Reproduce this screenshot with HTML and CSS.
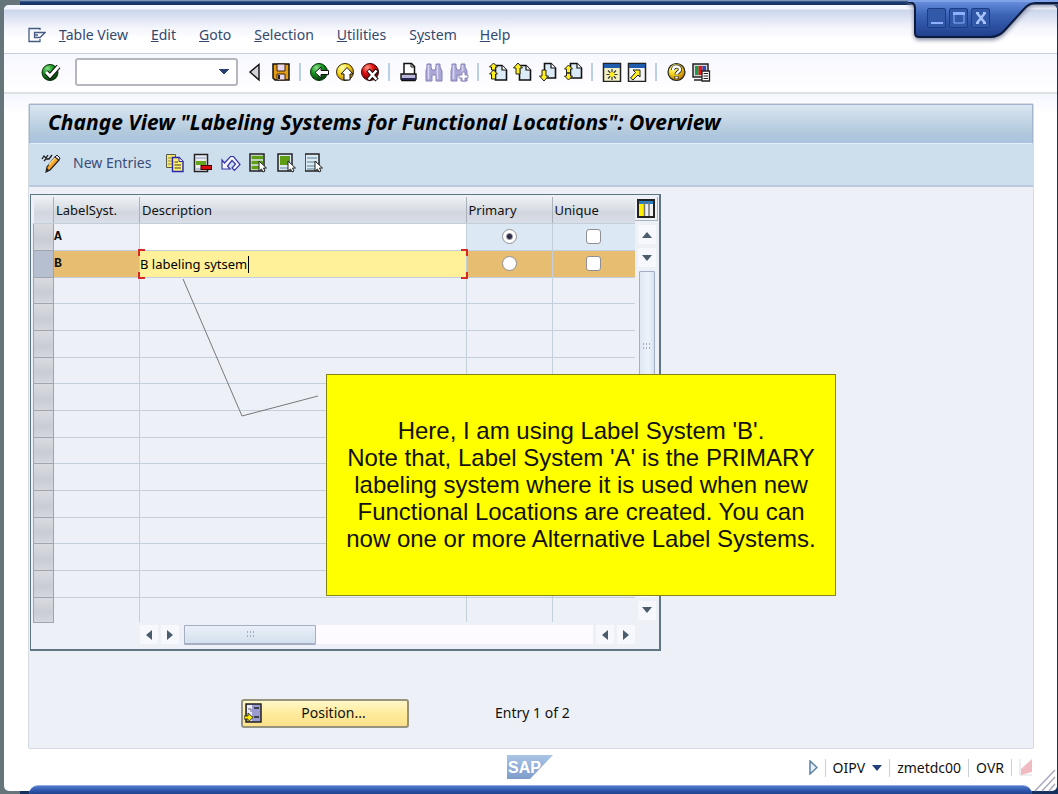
FILE: index.html
```html
<!doctype html>
<html lang="en">
    <head>
        <meta charset="utf-8" />
        <title>Change View "Labeling Systems for Functional Locations": Overview</title>
        <link rel="stylesheet" href="styles.css">
    </head>
    <body>
        <!-- Shared icon parts -->
        <svg class="defs" aria-hidden="true">
            <defs>
                <radialGradient id="green" cx="35%" cy="25%" r="75%"><stop offset="0" stop-color="#8fe08f" /><stop offset=".45" stop-color="#189a20" /><stop offset="1" stop-color="#063c0a" /></radialGradient>
                <radialGradient id="yellow" cx="35%" cy="25%" r="75%"><stop offset="0" stop-color="#ffffb0" /><stop offset=".5" stop-color="#f6d81c" /><stop offset="1" stop-color="#b87800" /></radialGradient>
                <radialGradient id="red" cx="35%" cy="25%" r="75%"><stop offset="0" stop-color="#ff9a8a" /><stop offset=".45" stop-color="#e01010" /><stop offset="1" stop-color="#6a0000" /></radialGradient>
                <linearGradient id="notch" x2="0" y2="1"><stop offset="0" stop-color="#6d93e0" /><stop offset=".4" stop-color="#3b63b6" /><stop offset="1" stop-color="#1f3f8c" /></linearGradient>
                <linearGradient id="logo" x2="0" y2="1"><stop offset="0" stop-color="#a9c4e6" /><stop offset="1" stop-color="#7d9cc9" /></linearGradient>
                <g id="page"><path d="M7.500 3.500H14L18.500 8V18H7.500Z" fill="#dcebf8" stroke="#111" stroke-width="1.600" /><path d="M14 3.500V8H18.500" fill="#fff" stroke="#111" stroke-width="1.200" /></g>
                <g id="binoculars"><path d="M3 2H7V5L8 8H11L12 5V2H16V5L18 9V19H12V13H8V19H2V9L3 5Z" fill="#aaa7d6" stroke="#8583b5" /><path d="M4.500 3V17M13.500 3V17" stroke="#d9d8f2" stroke-width="1.500" /></g>
                <g id="sheet"><rect x="2" y="2" width="14" height="17" fill="#dce9f2" stroke="#222" stroke-width="1.500" /></g>
                <path id="cursor" d="M12 9V19L14.500 17L16 20L18 19L16.500 16H19.500Z" fill="#fff" stroke="#222" />
            </defs>
        </svg>

        <div class="window">
            <nav class="menubar">
                <button class="menu-icon" type="button" aria-label="Menu">
                    <svg width="18" height="16" viewBox="0 0 18 16" fill="none" stroke="#465b80" stroke-width="1.300"><path d="M12 3V1.500H1V14.500H12V12M6.500 5.500H17L12 10.500H6.500ZM6.500 8H10" /></svg>
                </button>
                <a href="#"><u>T</u>able View</a>
                <a href="#"><u>E</u>dit</a>
                <a href="#"><u>G</u>oto</a>
                <a href="#"><u>S</u>election</a>
                <a href="#"><u>U</u>tilities</a>
                <a href="#">S<u>y</u>stem</a>
                <a href="#"><u>H</u>elp</a>
            </nav>

            <div class="toolbar">
                <button class="icon" type="button" aria-label="Enter"><svg viewBox="0 0 20 20"><circle cx="9" cy="10.500" r="8" fill="url(#green)" stroke="#063006" /><path d="M5 10L9 14L17.500 4.500" fill="none" stroke="#111" stroke-width="5" /><path d="M5 10L9 14L17.500 4.500" fill="none" stroke="#fff" stroke-width="3" /></svg></button>
                <select class="command" aria-label="Command"><option></option></select>
                <button class="icon back" type="button" aria-label="Collapse"><svg viewBox="0 0 20 20"><path d="M14 2.500V18L5 10Z" fill="#d2d4da" stroke="#111" stroke-width="1.400" /></svg></button>
                <button class="icon" type="button" aria-label="Save"><svg viewBox="0 0 20 20"><path d="M2 2H18V18H4L2 16Z" fill="#e79b13" stroke="#111" stroke-width="1.500" /><path d="M6 2H14V9H6Z" fill="#ead7f0" stroke="#3b2405" /><path d="M6 12H14V18H6Z" fill="#ead7f0" stroke="#3b2405" /><path d="M7 13H9V17H7Z" fill="#222" /></svg></button>
                <span class="sep"></span>
                <div class="group">
                    <button class="icon" type="button" aria-label="Back"><svg viewBox="0 0 20 20"><circle cx="9" cy="10" r="8.500" fill="url(#green)" stroke="#063006" /><path d="M5 10.500L11 5V8.500H18.500V12.500H11V16Z" fill="#fff" stroke="#111" /></svg></button>
                    <button class="icon" type="button" aria-label="Exit"><svg viewBox="0 0 20 20"><circle cx="10" cy="10" r="8.500" fill="url(#yellow)" stroke="#3a2a00" /><path d="M12 5.500L18 12H15V18H9V12H6Z" fill="#fff" stroke="#111" /></svg></button>
                    <button class="icon" type="button" aria-label="Cancel"><svg viewBox="0 0 20 20"><circle cx="10" cy="10" r="8.500" fill="url(#red)" stroke="#400" /><path d="M8 8L17 18M17 8L8 18" stroke="#111" stroke-width="4.500" /><path d="M8.500 8.500L16.500 17.500M16.500 8.500L8.500 17.500" stroke="#fff" stroke-width="2.500" /></svg></button>
                </div>
                <span class="sep"></span>
                <div class="group">
                    <button class="icon" type="button" aria-label="Print"><svg viewBox="0 0 20 20"><path d="M5 12V1.500H12.500L15.500 4.500V12" fill="#fff" stroke="#111" stroke-width="1.500" /><path d="M12 2V5H15" fill="none" stroke="#111" /><path d="M2 12H17V17L16 18.500H3L2 17Z" fill="#b9b7da" stroke="#111" stroke-width="1.400" /><path d="M3 17H16.500" stroke="#24244c" stroke-width="2" /></svg></button>
                    <button class="icon" type="button" aria-label="Find"><svg viewBox="0 0 20 20"><use href="#binoculars" /></svg></button>
                    <button class="icon" type="button" aria-label="Find next"><svg viewBox="0 0 20 20"><use href="#binoculars" /><path d="M13 10H16V13H19V16H16V19H13V16H10V13H13Z" fill="#fff" stroke="#8d8bbb" /></svg></button>
                </div>
                <span class="sep"></span>
                <div class="group">
                    <button class="icon" type="button" aria-label="First page"><svg viewBox="0 0 20 20"><use href="#page" /><path d="M5.500 1L9.500 5H7.500V8H3.500V5H1.500ZM5.500 8L9.500 12H7.500V17H3.500V12H1.500Z" fill="#ffee20" stroke="#222" /></svg></button>
                    <button class="icon" type="button" aria-label="Previous page"><svg viewBox="0 0 20 20"><use href="#page" x="-1" /><path d="M5 1L9.500 6H7V12H3V6H0.500Z" fill="#ffee20" stroke="#222" /></svg></button>
                    <button class="icon" type="button" aria-label="Next page"><svg viewBox="0 0 20 20"><use href="#page" x="-1" y="-2" /><path d="M6 19L10.500 14H8V8H4V14H1.500Z" fill="#ffee20" stroke="#222" /></svg></button>
                    <button class="icon" type="button" aria-label="Last page"><svg viewBox="0 0 20 20"><use href="#page" y="-2" /><path d="M5.500 3L9.500 7H7.500V11H3.500V7H1.500ZM5.500 18L1.500 14H3.500V11H7.500V14H9.500Z" fill="#ffee20" stroke="#222" /></svg></button>
                </div>
                <span class="sep"></span>
                <div class="group">
                    <button class="icon" type="button" aria-label="New session"><svg viewBox="0 0 20 20"><rect x="1.500" y="1.500" width="17" height="18" fill="#f3f0c4" stroke="#222" stroke-width="1.500" /><path d="M2 4H18" stroke="#1f5dac" stroke-width="4" /><path d="M10 7V18M4.500 12.500H15.500M6 8.500L14 16.500M14 8.500L6 16.500" stroke="#333" stroke-width="1.200" /><circle cx="10" cy="12.500" r="2.500" fill="#ffef20" /></svg></button>
                    <button class="icon" type="button" aria-label="Create shortcut"><svg viewBox="0 0 20 20"><rect x="1.500" y="1.500" width="17" height="18" fill="#f4f4f4" stroke="#222" stroke-width="1.500" /><path d="M2 4H18" stroke="#1f5dac" stroke-width="4" /><path d="M6 8H13V15L11 13L6 18L3.500 16L8.500 10.500Z" fill="#ffee20" stroke="#222" /></svg></button>
                </div>
                <span class="sep"></span>
                <div class="group">
                    <button class="icon" type="button" aria-label="Help"><svg viewBox="0 0 20 20"><circle cx="10.500" cy="10" r="8.500" fill="url(#yellow)" stroke="#222" stroke-width="1.200" /><path d="M7 8C7 3.500 14 3.500 14 7.500C14 10 10.500 10 10.500 12.500M10.500 14V17" fill="none" stroke="#222" stroke-width="4" /><path d="M7 8C7 3.500 14 3.500 14 7.500C14 10 10.500 10 10.500 12.500M10.500 14.500V16.500" fill="none" stroke="#fff" stroke-width="2.500" /></svg></button>
                    <button class="icon" type="button" aria-label="Customize layout"><svg viewBox="0 0 20 20"><path d="M2 2H17V15H2Z" fill="#d5d5d5" stroke="#222" stroke-width="1.500" /><path d="M4 4H7.500V13H4Z" fill="#16a045" /><path d="M7.500 4H11.500V13H7.500Z" fill="#e01818" /><path d="M11.500 4H15V13H11.500Z" fill="#2a48c0" /><path d="M3 18H11" stroke="#222" stroke-width="1.500" /><path d="M11 9H18.500V19H11Z" fill="#fff" stroke="#222" stroke-width="1.300" /><path d="M12.500 11.500H17M12.500 14H17M12.500 16.500H17" stroke="#222" /></svg></button>
                </div>
            </div>

            <main class="work">
                <section class="panel">
                    <h1 class="title">Change View "Labeling Systems for Functional Locations": Overview</h1>
                    <div class="app-toolbar">
                        <button class="icon" type="button" aria-label="Display or change"><svg viewBox="0 0 20 20"><path d="M1 6L3 3L5 5L7 2M3 8L5 6L8 6L11 2" fill="none" stroke="#222" stroke-width="1.300" /><path d="M14 4L18 7L9 17L5 19L6 14Z" fill="#f6a328" stroke="#222" stroke-width="1.200" /><path d="M14 4L16 2L19 5L18 7Z" fill="#e9e9ef" stroke="#222" /><path d="M8 12L14 5" stroke="#ffe07a" stroke-width="1.500" /><path d="M5 19L6 15L8.500 17.500Z" fill="#222" /></svg></button>
                        <button class="text-button" type="button">New Entries</button>
                        <div class="app-icons">
                            <button class="icon" type="button" aria-label="Copy as"><svg viewBox="0 0 20 20"><path d="M1.500 1.500H10.500V14.500H1.500Z" fill="#f2e66b" stroke="#5a5a46" /><path d="M3 5H9M3 8H9M3 11H9" stroke="#9a914a" /><path d="M7.500 4.500H14L18 8.500V18.500H7.500Z" fill="#ffee70" stroke="#2725b0" stroke-width="1.400" /><path d="M14 5V8.500H18" fill="#fff" stroke="#2725b0" /><path d="M9.500 9H13M9.500 12H16M9.500 15H16" stroke="#7c7640" stroke-width="1.300" /></svg></button>
                            <button class="icon" type="button" aria-label="Delete"><svg viewBox="0 0 20 20"><rect x="1.500" y="1.500" width="13" height="17" fill="#eee" stroke="#222" stroke-width="1.500" /><path d="M3 5H13" stroke="#b8c2e2" stroke-width="2" /><path d="M3 10H13" stroke="#65a51c" stroke-width="4" /><path d="M3 16H13" stroke="#b8c2e2" stroke-width="2" /><rect x="8" y="12.500" width="10.500" height="4" fill="#d80c0c" stroke="#400" /></svg></button>
                            <button class="icon" type="button" aria-label="Undo"><svg viewBox="0 0 20 20"><path d="M1 7V16H9L6.500 13L11 7.500L14.500 11L11 15L13.500 17.500L19 11.500L12.500 3.500H9.500L3.500 10Z" fill="#f4f6ff" stroke="#3734a6" stroke-width="1.200" /></svg></button>
                            <button class="icon" type="button" aria-label="Select all"><svg viewBox="0 0 20 20"><use href="#sheet" x="-1" y="-1" /><path d="M2.500 4.500H14M2.500 9.500H14M2.500 14.500H12" stroke="#5f9e13" stroke-width="3.500" /><use href="#cursor" x="-2" y="-1" /></svg></button>
                            <button class="icon" type="button" aria-label="Select block"><svg viewBox="0 0 20 20"><use href="#sheet" x="-1" y="-1" /><path d="M3 3H13V12H3Z" fill="#5f9e13" /><path d="M3 15H11" stroke="#a3bac9" stroke-width="2" /><use href="#cursor" x="-1" y="-1" /></svg></button>
                            <button class="icon" type="button" aria-label="Deselect all"><svg viewBox="0 0 20 20"><use href="#sheet" x="-2" y="-1" /><path d="M2 5H12M2 9H12M2 13H10M2 16H10" stroke="#83a2b4" stroke-width="1.500" /><use href="#cursor" x="-2" y="-1" /></svg></button>
                        </div>
                    </div>

                    <div class="content">
                        <div class="grid">
                            <table class="entries">
                                <colgroup><col class="col-select"><col class="col-label"><col><col class="col-flag"><col class="col-unique"></colgroup>
                                <thead>
                                    <tr><th></th><th>LabelSyst.</th><th>Description</th><th>Primary</th><th>Unique</th></tr>
                                </thead>
                                <tbody>
                                    <tr class="first">
                                        <td></td><td class="key">A</td>
                                        <td class="edit"><input type="text" value="" aria-label="Description of A"></td>
                                        <td class="flag"><input type="radio" name="primary" aria-label="A is primary" checked></td>
                                        <td class="flag"><input type="checkbox" aria-label="A is unique"></td>
                                    </tr>
                                    <tr class="current">
                                        <td></td><td class="key">B</td>
                                        <td class="edit focus"><input type="text" value="B labeling sytsem" aria-label="Description of B"><span class="caret"></span><span class="corners"></span></td>
                                        <td class="flag"><input type="radio" name="primary" aria-label="B is primary"></td>
                                        <td class="flag"><input type="checkbox" aria-label="B is unique"></td>
                                    </tr>
                                    <tr><td></td><td></td><td></td><td></td><td></td></tr>
                                    <tr><td></td><td></td><td></td><td></td><td></td></tr>
                                    <tr><td></td><td></td><td></td><td></td><td></td></tr>
                                    <tr><td></td><td></td><td></td><td></td><td></td></tr>
                                    <tr><td></td><td></td><td></td><td></td><td></td></tr>
                                    <tr><td></td><td></td><td></td><td></td><td></td></tr>
                                    <tr><td></td><td></td><td></td><td></td><td></td></tr>
                                    <tr><td></td><td></td><td></td><td></td><td></td></tr>
                                    <tr><td></td><td></td><td></td><td></td><td></td></tr>
                                    <tr><td></td><td></td><td></td><td></td><td></td></tr>
                                    <tr><td></td><td></td><td></td><td></td><td></td></tr>
                                    <tr><td></td><td></td><td></td><td></td><td></td></tr>
                                    <tr><td></td><td></td><td></td><td></td><td></td></tr>
                                </tbody>
                            </table>
                            <div class="vscroll">
                                <button class="config" type="button" aria-label="Table settings"><svg width="18" height="19" viewBox="0 0 18 19"><rect x="1" y="1" width="16" height="17" fill="#eef0f2" stroke="#222" stroke-width="2" /><path d="M2 3.500H16" stroke="#2680c8" stroke-width="3" /><path d="M2 5H7V17H2Z" fill="#ffef00" /><path d="M7.500 3V17M12 3V17" stroke="#777" stroke-width="1.500" /></svg></button>
                                <button class="arrow" type="button" aria-label="Scroll up"><svg width="10" height="6"><path d="M0 6L5 0L10 6Z" /></svg></button>
                                <button class="arrow" type="button" aria-label="Scroll down"><svg width="10" height="6"><path d="M0 0H10L5 6Z" /></svg></button>
                                <div class="vthumb"><span class="grip"></span></div>
                                <div class="vtrack"></div>
                                <button class="arrow" type="button" aria-label="Page down"><svg width="10" height="6"><path d="M0 0H10L5 6Z" /></svg></button>
                            </div>
                            <div class="hscroll">
                                <button class="arrow" type="button" aria-label="Scroll left"><svg width="6" height="10"><path d="M6 0V10L0 5Z" /></svg></button>
                                <button class="arrow" type="button" aria-label="Scroll right"><svg width="6" height="10"><path d="M0 0V10L6 5Z" /></svg></button>
                                <div class="hthumb"><span class="grip"></span></div>
                                <div class="htrack"></div>
                                <button class="arrow" type="button" aria-label="Page left"><svg width="6" height="10"><path d="M6 0V10L0 5Z" /></svg></button>
                                <button class="arrow" type="button" aria-label="Page right"><svg width="6" height="10"><path d="M0 0V10L6 5Z" /></svg></button>
                            </div>
                        </div>

                        <div class="footer">
                            <button class="position" type="button">
                                <svg width="18" height="20" viewBox="0 0 18 20"><rect x="2" y="1" width="15" height="18" fill="#9a9bd0" stroke="#222" stroke-width="1.500" /><path d="M3 2H8V18H3Z" fill="#e8ebf4" /><path d="M10 5H15M10 14H15" stroke="#222" stroke-width="1.300" /><path d="M4 6H7V9" fill="none" stroke="#667" /><path d="M0 13H4V10L9 14.500L4 19V16H0Z" fill="#ffec00" stroke="#333" /></svg>
                                <span>Position...</span>
                            </button>
                            <span>Entry 1 of 2</span>
                        </div>
                    </div>
                </section>

                <!-- Annotation laid over the table -->
                <svg class="pointer" width="140" height="140" viewBox="0 0 140 140"><path d="M1 1L60 138L136 118" fill="none" stroke="#777" /></svg>
                <aside class="note">
                    <p>Here, I am using Label System 'B'.<br>Note that, Label System 'A' is the PRIMARY<br>labeling system where it is used when new<br>Functional Locations are created. You can<br>now one or more Alternative Label Systems.</p>
                </aside>
            </main>

            <footer class="status">
                <span></span>
                <svg class="logo" width="46" height="24" viewBox="0 0 46 24" role="img" aria-label="SAP"><path d="M0 0H46L23 24H0Z" fill="url(#logo)" /><text x="1" y="18">SAP</text></svg>
                <div class="status-fields">
                    <button type="button" aria-label="Expand"><svg width="9" height="15" viewBox="0 0 9 15"><path d="M1 1V14L8 7.500Z" fill="#e7f0f8" stroke="#5c81a5" stroke-width="1.500" /></svg></button>
                    <span class="field">OIPV <svg width="10" height="6"><path d="M0 0H10L5 6Z" fill="#24407c" /></svg></span>
                    <span class="field">zmetdc00</span>
                    <span class="field">OVR</span>
                    <span class="field"><svg width="13" height="17"><path d="M1 0V16H13" fill="none" stroke="#ddd" /><path d="M2 10L13 0V13L2 16Z" fill="#f0bcc1" /></svg></span>
                </div>
            </footer>
        </div>

        <div class="frame-bottom"></div>
        <svg class="resize" width="22" height="24" viewBox="0 0 22 24"><path d="M1 23L21 2M8 23L21 9M15 23L21 16" stroke="#a9aabd" stroke-width="1.500" /></svg>

        <div class="window-controls">
            <svg class="notch" width="150" height="44" viewBox="0 0 150 44"><path d="M0 2Q7 2 7 8V33Q7 37 11 37H82Q91 37 97 30L116 9Q121 3 128 3H150V0H0Z" fill="url(#notch)" stroke="#0c1b3e" stroke-width="2" /><path d="M0 0H150" stroke="#7fa3e8" stroke-width="4" /></svg>
            <div class="controls">
                <button type="button" aria-label="Minimize"><svg width="18" height="18" viewBox="0 0 18 18"><path d="M3 14H15" stroke="#8fb0ff" stroke-width="2" /></svg></button>
                <button type="button" aria-label="Maximize"><svg width="18" height="18" viewBox="0 0 18 18"><path d="M4 4H14V14H4Z" fill="none" stroke="#8fb0ff" /><path d="M3 4.500H15" stroke="#8fb0ff" stroke-width="3" /></svg></button>
                <button type="button" aria-label="Close"><svg width="18" height="18" viewBox="0 0 18 18"><path d="M5 4L13 14M13 4L5 14" stroke="#a9c3ff" stroke-width="2.500" /><path d="M4 4H7M11 4H14M4 14H7M11 14H14" stroke="#a9c3ff" stroke-width="2" /></svg></button>
            </div>
        </div>
    </body>
</html>
```
FILE: styles.css
```css
* {
    box-sizing: border-box;
}

body {
    margin: 0;
    padding: 5px 1px 3px 4px;
    min-height: 100vh;
    display: flex;
    position: relative;
    background: linear-gradient(90deg, #66757a 20px, transparent 20px), linear-gradient(#9db0cc 0, #1b3a74 2px, #14305f 5px);
    font-family: "Noto Sans", sans-serif;
    font-size: 13px;
    line-height: 18px;
    color: #111;
}

button {
    margin: 0;
    padding: 0;
    border: 0;
    background: none;
    font: inherit;
    color: inherit;
}

svg {
    display: block;
}

.defs {
    position: absolute;
    width: 0;
    height: 0;
}

.window {
    flex: 1;
    display: flex;
    flex-direction: column;
    background: #fff;
    border-radius: 5px;
    overflow: hidden;
}

/* Menu and system toolbar */
.menubar {
    display: flex;
    align-items: center;
    gap: 23px;
    height: 49px;
    padding: 11px 24px 0;
    border-bottom: 1px solid #c5d0d9;
    background: linear-gradient(#f4f7ff 0, #f4f7ff 4px, #cbd5ec 5px, #f2f4fb 22px, #fff 34px);
    font-size: 14px;
}

.menubar a {
    color: #34486e;
    text-decoration: none;
}

.menu-icon {
    margin-right: -10px;
}

.toolbar {
    display: flex;
    align-items: center;
    height: 40px;
    padding: 0 37px 2px;
    border-bottom: 2px solid #dfe2e5;
    background: linear-gradient(#f7f7ff, #fff);
}

.icon {
    width: 20px;
    height: 20px;
    flex: none;
}

.command {
    appearance: none;
    width: 163px;
    height: 28px;
    margin: 0 7px 0 14px;
    border: 2px solid #b5b7bf;
    border-radius: 3px;
    background: linear-gradient(to bottom right, #2b4070 50%, transparent 50%) right 7px center / 5px 6px no-repeat, linear-gradient(to bottom left, #2b4070 50%, transparent 50%) right 12px center / 5px 6px no-repeat, #fff;
}

.back {
    margin-right: 6px;
}

.sep {
    width: 2px;
    height: 18px;
    margin: 0 9px 0 8px;
    background: #b9d0e6;
}

.group {
    display: flex;
    gap: 5px;
}

/* Work area */
.work {
    flex: 1;
    display: flex;
    position: relative;
    padding: 9px 23px 0 24px;
    background: linear-gradient(#f5f5ff, #fff 20px);
}

.panel {
    flex: 1;
    border: 1px solid #d4dbe3;
    border-radius: 2px;
    background: #edf1f7;
}

.title {
    margin: 0;
    height: 40px;
    padding: 0 18px;
    border: 1px solid #a3b5cb;
    border-bottom: 1px solid #e4edf6;
    background: linear-gradient(#dbe6f2, #b3cadd 70%, #a9c2df);
    font-size: 21px;
    font-style: italic;
    line-height: 34px;
    color: #000;
}

.app-toolbar {
    display: flex;
    align-items: center;
    height: 43px;
    padding: 0 12px 4px;
    border-bottom: 2px solid #b9cbdc;
    background: #cddeed;
}

.text-button {
    margin: 0 14px 0 12px;
    font-size: 14px;
    color: #3b4c78;
}

.app-icons {
    display: flex;
    gap: 8px;
}

.content {
    padding: 7px 1px 14px;
}

.grid {
    display: grid;
    grid-template-columns: 602px 23px;
    width: max-content;
    padding: 2px 1px 2px 2px;
    border: 1px solid #5e7583;
    border-right-width: 2px;
    border-bottom-width: 2px;
}

.entries {
    width: 100%;
    table-layout: fixed;
    border-collapse: collapse;
}

.col-select {
    width: 20px;
}

.col-label {
    width: 86px;
}

.col-flag {
    width: 86px;
}

.col-unique {
    width: 83px;
}

.entries th,
.entries td {
    height: 27px;
    padding: 0 0 0 2px;
    border-left: 1px solid #c3d0dc;
    border-bottom: 1px solid #c3d0dc;
    text-align: left;
}

.entries tr:nth-child(3n) td {
    height: 26px;
}

.entries th {
    height: 26px;
    border-left-color: #a9b2b8;
    background: linear-gradient(#eef1f5, #d2d7df 60%, #d9dee6);
    font-weight: normal;
}

.entries td:first-child,
.entries th:first-child {
    border-left: 0;
}

.entries td:first-child {
    border: 1px solid #9ea5b1;
    background: linear-gradient(#d9dbe1, #c9cdd3 60%, #d3d6dc);
}

.entries .current td:first-child {
    background: #b5bfd0;
}

.entries .key {
    padding: 0;
    font-family: "Liberation Mono", monospace;
    font-weight: bold;
}

.entries tbody tr:last-child td {
    height: 25px;
    border-bottom-color: transparent;
}

.entries tbody tr:last-child td:first-child {
    border-bottom-color: #9ea5b1;
}

.first td {
    background: #dce9f5;
}

.first .key {
    background: #edf1f7;
}

.first .edit {
    background: #fff;
}

.current td {
    background: #e7bd72;
}

.entries .edit {
    position: relative;
    padding: 0;
}

.entries .focus {
    background: #fff199;
}

.edit input {
    display: block;
    width: 100%;
    padding: 0;
    border: 0;
    outline: 0;
    background: none;
    font: inherit;
    line-height: 20px;
}

.caret {
    position: absolute;
    top: 5px;
    left: 108px;
    width: 1px;
    height: 17px;
    background: #000;
}

/* Four red focus brackets round the active cell */
.corners {
    --red: linear-gradient(#d62a2a, #d62a2a);
    position: absolute;
    inset: -2px;
    pointer-events: none;
    background:
        var(--red) 0 0 / 7px 2px, var(--red) 0 0 / 2px 7px,
        var(--red) 100% 0 / 7px 2px, var(--red) 100% 0 / 2px 7px,
        var(--red) 0 100% / 7px 2px, var(--red) 0 100% / 2px 7px,
        var(--red) 100% 100% / 7px 2px, var(--red) 100% 100% / 2px 7px;
    background-repeat: no-repeat;
}

.entries .flag {
    padding: 0;
    text-align: center;
}

.flag input {
    appearance: none;
    display: block;
    width: 15px;
    height: 15px;
    margin: 0 auto;
    border: 1px solid #8f8f94;
    border-radius: 3px;
    background: #fff;
}

.flag input[type="radio"] {
    border-radius: 50%;
}

.flag input:checked {
    background: radial-gradient(circle, #2d2b45 2px, #fff 4px);
}

/* Scroll bars */
.vscroll {
    display: flex;
    flex-direction: column;
    align-items: center;
    gap: 4px;
}

.config {
    width: 23px;
    height: 24px;
    border-right: 1px solid #a9b2b8;
    border-bottom: 1px solid #a9b2b8;
}

.config svg {
    margin: 0 auto;
}

.arrow {
    display: grid;
    place-items: center;
    width: 18px;
    height: 19px;
    flex: none;
    background: #f7f8fd;
    fill: #4b5d6b;
}

.vthumb,
.hthumb {
    display: grid;
    place-items: center;
    border: 1px solid #a5aec2;
    border-radius: 1px;
    background: linear-gradient(90deg, #dfe8f3, #edf3fa 60%, #d5e2ef);
}

.vthumb {
    width: 16px;
    height: 150px;
}

.vtrack {
    flex: 1;
    width: 16px;
    background: #fcfbff;
}

.vtrack + .arrow {
    margin-bottom: 3px;
}

.grip {
    width: 9px;
    height: 9px;
    background: radial-gradient(circle, #a3aec0 1px, transparent 1px) 0 0 / 3px 4px;
}

.hscroll {
    display: flex;
    align-items: center;
    gap: 3px;
    margin: 1px 0 1px 107px;
    height: 22px;
}

.hthumb {
    width: 132px;
    height: 20px;
    margin-left: 2px;
    border-bottom-width: 2px;
    background: linear-gradient(#eaf0f8, #d3e0ed);
}

.htrack {
    flex: 1;
    height: 19px;
    margin-left: -3px;
    background: #fdfbff;
}

.footer {
    display: flex;
    align-items: center;
    gap: 86px;
    margin: 48px 0 0 211px;
    font-size: 14px;
}

.position {
    display: flex;
    align-items: center;
    width: 168px;
    height: 29px;
    padding: 0 2px 0 1px;
    border: 2px solid #96947e;
    border-radius: 3px;
    background: linear-gradient(#fff8c9, #ffeb9c 50%, #fbe18c);
}

.position span {
    flex: 1;
    text-align: center;
}

/* Annotation */
.pointer {
    position: absolute;
    left: 178px;
    top: 184px;
}

.note {
    position: absolute;
    left: 322px;
    top: 280px;
    width: 510px;
    height: 222px;
    padding: 42px 0;
    border: 1px solid #85851c;
    background: #ff0;
    font-family: "Liberation Sans", Arial, sans-serif;
    font-size: 24px;
    line-height: 27px;
    text-align: center;
    white-space: nowrap;
}

.note p {
    margin: 0;
}

/* Status bar and window frame */
.status {
    display: grid;
    grid-template-columns: 1fr auto 1fr;
    align-items: center;
    height: 42px;
    padding: 0 25px 5px 23px;
}

.logo {
    align-self: start;
    margin-top: 6px;
}

.logo text {
    font-family: "Liberation Sans", Arial, sans-serif;
    font-size: 16px;
    font-weight: bold;
    fill: #fff;
}

.status-fields {
    display: flex;
    justify-content: flex-end;
    align-items: center;
    gap: 7px;
}

.field {
    display: flex;
    align-items: center;
    gap: 7px;
    padding-left: 7px;
    border-left: 1px solid #c9ced8;
    font-size: 14px;
}

.frame-bottom {
    position: absolute;
    left: 29px;
    right: 26px;
    bottom: 0;
    height: 9px;
    border-top: 1px solid #93aede;
    border-radius: 18px 18px 0 0;
    background: linear-gradient(#5079cc, #2c53a8 60%, #1f4390);
}

.resize {
    position: absolute;
    right: 2px;
    bottom: 2px;
}

.window-controls {
    position: absolute;
    top: 0;
    right: 0;
}

.notch {
    filter: drop-shadow(0 2px 2px #8088a0);
}

.controls {
    position: absolute;
    top: 8px;
    left: 19px;
    display: flex;
    gap: 3px;
}

.controls button {
    width: 19px;
    height: 20px;
    border: 1px solid #1d3c86;
    border-radius: 2px;
    background: #3159a8;
}
```
